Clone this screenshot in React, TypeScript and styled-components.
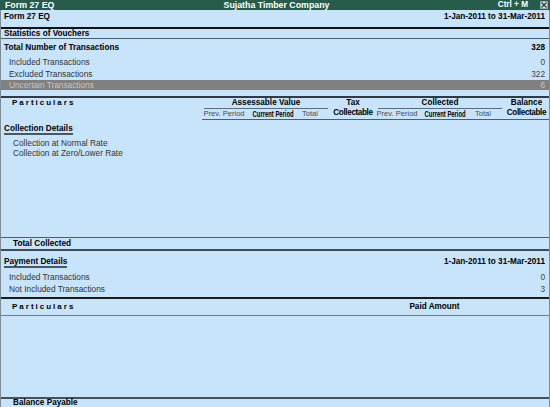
import React from "react";
import styled, { createGlobalStyle } from "styled-components";

const Global = createGlobalStyle`
  html, body { margin: 0; padding: 0; background: #c8e4fb; }
  body { font-family: "Liberation Sans", Arial, sans-serif; }
`;

const Screen = styled.div`
  width: 550px;
  height: 407px;
  display: flex;
  flex-direction: column;
  overflow: hidden;
  background: #c8e4fb;
  color: #000;
`;

const TitleBar = styled.div`
  flex: none;
  height: 10px;
  background: #275c4c;
  color: #fff;
  display: grid;
  grid-template-columns: 1fr auto 1fr;
  align-items: center;
  font-weight: bold;
  font-size: 8.8px;
  line-height: 10px;
  padding: 0 2px 0 5px;
  white-space: nowrap;
`;

const TitleRight = styled.div`
  display: flex;
  justify-content: flex-end;
  align-items: center;
  gap: 12px;
  font-size: 8.2px;
`;

const CloseBox = styled.div`
  width: 8px;
  height: 8px;
  background: #d8dcdc;
  border: 1px solid #9aa;
  box-sizing: border-box;
  display: flex;
  align-items: center;
  justify-content: center;
`;

const Body = styled.div`
  flex: 1;
  display: flex;
  flex-direction: column;
  border-left: 1px solid #7d8b97;
  border-right: 1px solid #7d8b97;
`;

const Rule = styled.div<{ $h?: number; $c?: string }>`
  flex: none;
  height: ${(p) => p.$h ?? 1}px;
  background: ${(p) => p.$c ?? "#5d6d7b"};
`;

const Gap = styled.div<{ $h: number }>`
  flex: none;
  height: ${(p) => p.$h}px;
`;

const Row = styled.div<{
  $h: number;
  $indent?: number;
  $bold?: boolean;
  $align?: string;
  $top?: number;
}>`
  flex: none;
  box-sizing: border-box;
  height: ${(p) => p.$h}px;
  display: flex;
  align-items: ${(p) => p.$align ?? "center"};
  justify-content: space-between;
  padding: ${(p) => p.$top ?? 0}px 4px 0 ${(p) => p.$indent ?? 3}px;
  font-size: ${(p) => (p.$bold ? 8.2 : 8.3)}px;
  line-height: 10px;
  font-weight: ${(p) => (p.$bold ? "bold" : "normal")};
  color: ${(p) => (p.$bold ? "#000" : "#333")};
  white-space: nowrap;
`;

const Highlight = styled(Row)`
  background: #808080;
  color: #c6c6c6;
`;

const Num = styled.span<{ $bold?: boolean }>`
  font-weight: ${(p) => (p.$bold ? "bold" : "normal")};
  color: ${(p) => (p.$bold ? "#000" : "#454545")};
`;

const Underlined = styled.span`
  display: inline-block;
  font-weight: bold;
  font-size: 8.2px;
  line-height: 9px;
  color: #000;
  border-bottom: 2px solid #4a5660;
`;

const ColHead = styled.div`
  flex: none;
  height: 22px;
  display: grid;
  grid-template-columns: 201px 128px 46px 128px 1fr;
`;

const Spaced = styled.div`
  font-weight: bold;
  font-size: 8px;
  letter-spacing: 2px;
  line-height: 10px;
  padding-left: 11px;
  white-space: nowrap;
`;

const Group = styled.div`
  display: flex;
  flex-direction: column;
  border-bottom: 1px solid #4e5e6b;
`;

const GroupTitle = styled.div`
  height: 10px;
  margin: 0 2px;
  border-bottom: 1px solid #5d6d7b;
  text-align: center;
  font-weight: bold;
  font-size: 8.2px;
  line-height: 10px;
`;

const SubGrid = styled.div<{ $cols: string }>`
  height: 10px;
  display: grid;
  grid-template-columns: ${(p) => p.$cols};
  align-items: center;
`;

const Sub = styled.span<{ $bold?: boolean }>`
  display: block;
  text-align: center;
  white-space: nowrap;
  font-size: ${(p) => (p.$bold ? 8.4 : 7.6)}px;
  font-weight: ${(p) => (p.$bold ? "bold" : "normal")};
  color: ${(p) => (p.$bold ? "#000" : "#4a4a4a")};
  line-height: 10px;
  ${(p) => (p.$bold ? "transform: scaleX(0.7);" : "")}
`;

const Stack = styled.div`
  display: flex;
  flex-direction: column;
  align-items: center;
  border-bottom: 1px solid #4e5e6b;
  font-weight: bold;
  font-size: 8.2px;
  line-height: 10px;
  white-space: nowrap;
`;

const Narrow = styled.span`
  letter-spacing: -0.4px;
`;

const Area = styled.div<{ $h: number }>`
  flex: none;
  height: ${(p) => p.$h}px;
  display: flex;
  flex-direction: column;
`;

const PayHead = styled.div`
  flex: none;
  height: 16px;
  display: grid;
  grid-template-columns: 319px 1fr;
  align-items: center;
`;

const PaidTitle = styled.div`
  text-align: center;
  font-weight: bold;
  font-size: 8.2px;
  line-height: 10px;
`;

const CloseIcon = () => (
  <svg width="6" height="6" viewBox="0 0 6 6">
    <path d="M0.5 0.5 L5.5 5.5 M5.5 0.5 L0.5 5.5" stroke="#333" strokeWidth="1.1" />
  </svg>
);

export default function App() {
  return (
    <>
      <Global />
      <Screen>
        <TitleBar>
          <span>Form 27 EQ</span>
          <span>Sujatha Timber Company</span>
          <TitleRight>
            <span>Ctrl + M</span>
            <CloseBox>
              <CloseIcon />
            </CloseBox>
          </TitleRight>
        </TitleBar>
        <Body>
          <Row $h={17} $bold $align="flex-start" $top={2}>
            <span>Form 27 EQ</span>
            <span>1-Jan-2011 to 31-Mar-2011</span>
          </Row>
          <Rule $h={2} $c="#111" />
          <Row $h={9} $bold>
            <span>Statistics of Vouchers</span>
          </Row>
          <Rule $c="#4e5d6a" />
          <Row $h={17} $bold>
            <span>Total Number of Transactions</span>
            <Num $bold>328</Num>
          </Row>
          <Row $h={12} $indent={8}>
            <span>Included Transactions</span>
            <Num>0</Num>
          </Row>
          <Row $h={11} $indent={8}>
            <span>Excluded Transactions</span>
            <Num>322</Num>
          </Row>
          <Gap $h={1} />
          <Highlight $h={10} $indent={8}>
            <span>Uncertain Transactions</span>
            <span>6</span>
          </Highlight>
          <Gap $h={6} />
          <Rule $h={2} $c="#2f3a44" />
          <ColHead>
            <Spaced>Particulars</Spaced>
            <Group>
              <GroupTitle>Assessable Value</GroupTitle>
              <SubGrid $cols="44px 44px 40px">
                <Sub>Prev. Period</Sub>
                <Sub $bold>Current Period</Sub>
                <Sub>Total</Sub>
              </SubGrid>
            </Group>
            <Stack>
              <span>Tax</span>
              <Narrow>Collectable</Narrow>
            </Stack>
            <Group>
              <GroupTitle>Collected</GroupTitle>
              <SubGrid $cols="42px 44px 42px">
                <Sub>Prev. Period</Sub>
                <Sub $bold>Current Period</Sub>
                <Sub>Total</Sub>
              </SubGrid>
            </Group>
            <Stack>
              <span>Balance</span>
              <Narrow>Collectable</Narrow>
            </Stack>
          </ColHead>
          <Area $h={117}>
            <Row $h={18} $align="flex-start" $top={4}>
              <Underlined>Collection Details</Underlined>
            </Row>
            <Row $h={10} $indent={12}>
              <span>Collection at Normal Rate</span>
            </Row>
            <Row $h={10} $indent={12}>
              <span>Collection at Zero/Lower Rate</span>
            </Row>
          </Area>
          <Rule $c="#4e5e6b" />
          <Row $h={11} $bold $indent={12}>
            <span>Total Collected</span>
          </Row>
          <Rule $h={2} $c="#3e4b56" />
          <Row $h={20} $align="flex-start" $top={6} $bold>
            <Underlined>Payment Details</Underlined>
            <span>1-Jan-2011 to 31-Mar-2011</span>
          </Row>
          <Row $h={12} $indent={8}>
            <span>Included Transactions</span>
            <Num>0</Num>
          </Row>
          <Row $h={12} $indent={8}>
            <span>Not Included Transactions</span>
            <Num>3</Num>
          </Row>
          <Gap $h={2} />
          <Rule $h={2} $c="#1c1c1c" />
          <PayHead>
            <Spaced>Particulars</Spaced>
            <PaidTitle>Paid Amount</PaidTitle>
          </PayHead>
          <Rule $c="#6d7d8a" />
          <Area $h={81} />
          <Rule $h={2} $c="#44525e" />
          <Row $h={8} $bold $indent={12}>
            <span>Balance Payable</span>
          </Row>
        </Body>
      </Screen>
    </>
  );
}
